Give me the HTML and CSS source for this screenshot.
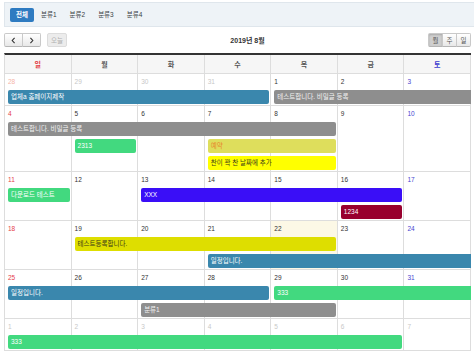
FILE: index.html
```html
<!DOCTYPE html>
<html lang="ko">
<head>
<meta charset="utf-8">
<title>캘린더</title>
<link rel="stylesheet" href="styles.css">
</head>
<body>
<div class="topbar">
  <span class="tab active">전체</span>
  <span class="tab">분류1</span>
  <span class="tab">분류2</span>
  <span class="tab">분류3</span>
  <span class="tab">분류4</span>
</div>

<div class="toolbar">
  <div class="tb-left">
    <div class="btn-group">
      <button class="btn nav"><svg width="5" height="7" viewBox="0 0 5 7"><path d="M3.6 0.8 L1.2 3.5 L3.6 6.2" fill="none" stroke="#333" stroke-width="1.1"/></svg></button>
      <button class="btn nav"><svg width="5" height="7" viewBox="0 0 5 7"><path d="M1.4 0.8 L3.8 3.5 L1.4 6.2" fill="none" stroke="#333" stroke-width="1.1"/></svg></button>
    </div>
    <button class="btn today" disabled>오늘</button>
  </div>
  <h2 class="title">2019년 8월</h2>
  <div class="btn-group">
    <button class="btn view active">월</button>
    <button class="btn view">주</button>
    <button class="btn view">일</button>
  </div>
</div>

<div class="cal">
  <div class="head">
    <div class="hd sun">일</div>
    <div class="hd">월</div>
    <div class="hd">화</div>
    <div class="hd">수</div>
    <div class="hd">목</div>
    <div class="hd">금</div>
    <div class="hd sat">토</div>
  </div>

  <div class="week rows-1">
    <div class="day"><span class="num other sun">28</span></div>
    <div class="day"><span class="num other">29</span></div>
    <div class="day"><span class="num other">30</span></div>
    <div class="day"><span class="num other">31</span></div>
    <div class="day"><span class="num">1</span></div>
    <div class="day"><span class="num">2</span></div>
    <div class="day"><span class="num sat">3</span></div>
    <div class="ev blue c1 s4 r1">업체a 홈페이지제작</div>
    <div class="ev gray c5 s3 r1 cont">테스트합니다. 비밀글 등록</div>
  </div>

  <div class="week rows-3">
    <div class="day"><span class="num sun">4</span></div>
    <div class="day"><span class="num">5</span></div>
    <div class="day"><span class="num">6</span></div>
    <div class="day"><span class="num">7</span></div>
    <div class="day"><span class="num">8</span></div>
    <div class="day"><span class="num">9</span></div>
    <div class="day"><span class="num sat">10</span></div>
    <div class="ev gray c1 s5 r1">테스트합니다. 비밀글 등록</div>
    <div class="ev green c2 s1 r2">2313</div>
    <div class="ev olive c4 s2 r2">예약</div>
    <div class="ev yellow c4 s2 r3">찬이 꽉 찬 날짜에 추가</div>
  </div>

  <div class="week rows-2">
    <div class="day"><span class="num sun">11</span></div>
    <div class="day"><span class="num">12</span></div>
    <div class="day"><span class="num">13</span></div>
    <div class="day"><span class="num">14</span></div>
    <div class="day"><span class="num">15</span></div>
    <div class="day"><span class="num">16</span></div>
    <div class="day"><span class="num sat">17</span></div>
    <div class="ev green c1 s1 r1">다운로드 테스트</div>
    <div class="ev violet c3 s4 r1">XXX</div>
    <div class="ev crimson c6 s1 r2">1234</div>
  </div>

  <div class="week rows-2">
    <div class="day"><span class="num sun">18</span></div>
    <div class="day"><span class="num">19</span></div>
    <div class="day"><span class="num">20</span></div>
    <div class="day"><span class="num">21</span></div>
    <div class="day today-cell"><span class="num">22</span></div>
    <div class="day"><span class="num">23</span></div>
    <div class="day"><span class="num sat">24</span></div>
    <div class="ev mustard c2 s4 r1">테스트등록합니다.</div>
    <div class="ev blue c4 s4 r2 cont">일정입니다.</div>
  </div>

  <div class="week rows-2">
    <div class="day"><span class="num sun">25</span></div>
    <div class="day"><span class="num">26</span></div>
    <div class="day"><span class="num">27</span></div>
    <div class="day"><span class="num">28</span></div>
    <div class="day"><span class="num">29</span></div>
    <div class="day"><span class="num">30</span></div>
    <div class="day"><span class="num sat">31</span></div>
    <div class="ev blue c1 s4 r1">일정입니다.</div>
    <div class="ev green c5 s3 r1 cont">333</div>
    <div class="ev gray c3 s3 r2">분류1</div>
  </div>

  <div class="week rows-1">
    <div class="day"><span class="num other">1</span></div>
    <div class="day"><span class="num other">2</span></div>
    <div class="day"><span class="num other">3</span></div>
    <div class="day"><span class="num other">4</span></div>
    <div class="day"><span class="num other">5</span></div>
    <div class="day"><span class="num other">6</span></div>
    <div class="day"><span class="num other">7</span></div>
    <div class="ev green c1 s6 r1">333</div>
  </div>
</div>
</body>
</html>
```

FILE: styles.css
```css
* { box-sizing: border-box; }

body {
  margin: 0;
  font-family: "Liberation Sans", "Noto Sans CJK KR", sans-serif;
  color: #333;
  background: #fff;
}

/* top category bar */
.topbar {
  margin: 2px 0 0 4px;
  height: 25px;
  background: #eef3f7;
  border: 1px solid #dfe6ec;
  border-right: 0;
  display: flex;
  align-items: center;
  gap: 1px;
  padding-left: 5px;
}
.tab {
  font-size: 6.5px;
  padding: 0 6px;
  height: 14px;
  line-height: 14px;
  border-radius: 2px;
  color: #3a3f44;
}
.tab.active {
  background: #2e7bc1;
  color: #fff;
  font-weight: bold;
}

/* toolbar */
.toolbar {
  margin: 6px 3px 0 4px;
  height: 14px;
  display: flex;
  align-items: center;
}
.tb-left {
  display: flex;
  gap: 6px;
}
.title {
  flex: 1;
  margin: 0;
  text-align: center;
  font-size: 7px;
  font-weight: bold;
  color: #333;
}
.btn-group {
  display: flex;
}
.btn {
  height: 14px;
  padding: 0;
  margin: 0;
  border: 1px solid #c9c9c9;
  border-bottom-color: #b5b5b5;
  background: linear-gradient(#ffffff, #e8e8e8);
  font-family: inherit;
  font-size: 6.5px;
  color: #333;
  display: flex;
  align-items: center;
  justify-content: center;
  border-radius: 0;
}
.btn-group .btn + .btn { margin-left: -1px; }
.btn-group .btn:first-child { border-radius: 2px 0 0 2px; }
.btn-group .btn:last-child { border-radius: 0 2px 2px 0; }
.btn.nav { width: 19px; }
.btn.today {
  width: 20px;
  border-radius: 2px;
  color: #b0b0b0;
  background: #ececec;
  border-color: #dcdcdc;
}
.btn.view { width: 15px; color: #555; }
.btn.view.active {
  background: #cfcfcf;
  box-shadow: inset 0 1px 2px rgba(0, 0, 0, 0.18);
}

/* calendar */
.cal {
  margin: 6px 3px 0 4px;
  border-top: 2px solid #333;
  border-left: 1px solid #ddd;
}
.head {
  display: grid;
  grid-template-columns: repeat(7, 1fr);
  height: 19px;
  border-bottom: 1px solid #ddd;
  background: #f6f6f6;
}
.hd {
  border-right: 1px solid #ddd;
  display: flex;
  align-items: center;
  justify-content: center;
  font-size: 7px;
  font-weight: bold;
  color: #555;
}
.hd.sun { color: #e2393f; }
.hd.sat { color: #3b3bcf; }

.week {
  display: grid;
  grid-template-columns: repeat(7, 1fr);
  border-bottom: 1px solid #ddd;
}
.rows-1 { grid-template-rows: 14px 17px; }
.rows-2 { grid-template-rows: 14px 17px 17px; }
.rows-3 { grid-template-rows: 14px 17px 17px 17px; }

.day {
  grid-row: 1 / -1;
  border-right: 1px solid #ddd;
}
.day:nth-child(1) { grid-column: 1; }
.day:nth-child(2) { grid-column: 2; }
.day:nth-child(3) { grid-column: 3; }
.day:nth-child(4) { grid-column: 4; }
.day:nth-child(5) { grid-column: 5; }
.day:nth-child(6) { grid-column: 6; }
.day:nth-child(7) { grid-column: 7; }
.today-cell { background: #fcf8e6; }

.num {
  display: block;
  font-size: 6.5px;
  line-height: 8px;
  padding: 4px 0 0 3px;
  color: #333;
}
.num.sun { color: #e5414a; }
.num.sat { color: #4646d0; }
.num.other { color: #c8c8c8; }
.num.other.sun { color: #f5b4a8; }

/* events */
.ev {
  height: 14px;
  align-self: center;
  margin: 0 2px 0 3px;
  padding-left: 3px;
  border-radius: 2px;
  font-size: 6.5px;
  line-height: 14px;
  white-space: nowrap;
  overflow: hidden;
  color: #fff;
}
.ev.cont {
  margin-right: 0;
  border-radius: 2px 0 0 2px;
}
.c1 { grid-column-start: 1; }
.c2 { grid-column-start: 2; }
.c3 { grid-column-start: 3; }
.c4 { grid-column-start: 4; }
.c5 { grid-column-start: 5; }
.c6 { grid-column-start: 6; }
.s1 { grid-column-end: span 1; }
.s2 { grid-column-end: span 2; }
.s3 { grid-column-end: span 3; }
.s4 { grid-column-end: span 4; }
.s5 { grid-column-end: span 5; }
.s6 { grid-column-end: span 6; }
.r1 { grid-row: 2; }
.r2 { grid-row: 3; }
.r3 { grid-row: 4; }

.blue { background: #3a87ad; }
.gray { background: #8e8e8e; color: #f2f2f2; }
.green { background: #42d97f; }
.olive { background: #dede5c; color: #e8862c; }
.yellow { background: #ffff00; color: #3a3a1a; }
.violet { background: #3a0ef7; }
.crimson { background: #98002e; }
.mustard { background: #dede00; color: #3a3a1a; }
```
